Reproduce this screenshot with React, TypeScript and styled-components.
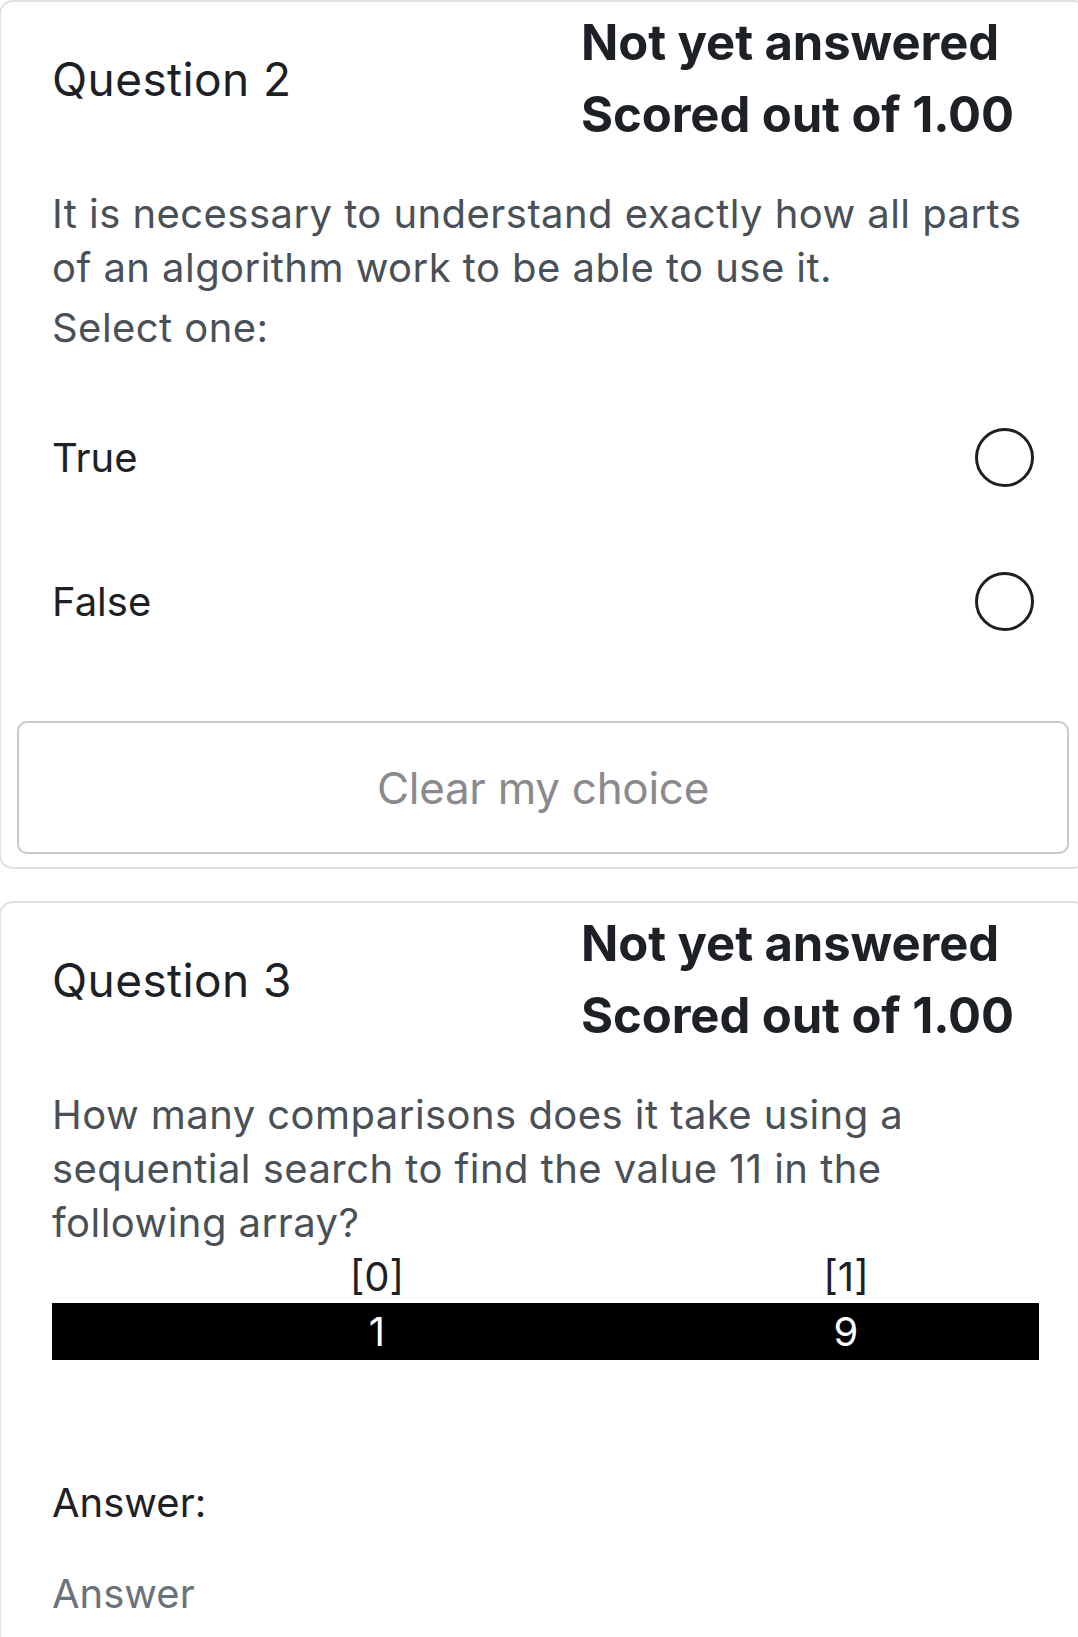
import styled, { createGlobalStyle } from 'styled-components'

const GlobalStyle = createGlobalStyle`
  html, body {
    margin: 0;
    padding: 0;
    background: #ffffff;
    overflow-x: hidden;
  }
  body {
    font-family: Inter, "Noto Sans", "Liberation Sans", sans-serif;
    color: #1d2125;
  }
`

const Page = styled.div`
  width: 1078px;
  overflow: hidden;
  display: flex;
  flex-direction: column;
  gap: 32px;
`

const Card = styled.section`
  width: 1088px;
  margin-left: -1px;
  box-sizing: border-box;
  border: 2px solid #dee2e6;
  border-radius: 14px;
  padding: 5px 52px 13px 51px;
  display: flex;
  flex-direction: column;
`

const Header = styled.header`
  display: grid;
  grid-template-columns: 529px 1fr;
  align-items: center;
`

const QuestionNo = styled.h3`
  margin: 0;
  font-size: 46px;
  font-weight: 400;
  letter-spacing: 0.4px;
  color: #1d2125;
`

const StateBlock = styled.div`
  display: flex;
  flex-direction: column;
`

const StateLine = styled.div`
  font-size: 49px;
  line-height: 72px;
  font-weight: 700;
  letter-spacing: -0.1px;
  color: #1d2125;
`

const QText = styled.div`
  margin-top: 36px;
  font-size: 40px;
  line-height: 54px;
  color: #495057;
  letter-spacing: 0.45px;
`

const Prompt = styled.div`
  margin-top: 6px;
  font-size: 40px;
  line-height: 54px;
  color: #495057;
  letter-spacing: 0.45px;
`

const Options = styled.div`
  margin-top: 30px;
  display: flex;
  flex-direction: column;
`

const OptionRow = styled.label`
  height: 144px;
  display: flex;
  align-items: center;
  justify-content: space-between;
  font-size: 40px;
  color: #1d2125;
`

const Radio = styled.span`
  width: 59px;
  height: 59px;
  box-sizing: border-box;
  border: 3px solid #1d2125;
  border-radius: 50%;
  margin-right: -1px;
`

const ClearButton = styled.button`
  margin: 48px -36px 0 -35px;
  height: 133px;
  box-sizing: border-box;
  border: 2px solid #c8c9cd;
  border-radius: 10px;
  background: #ffffff;
  font-family: inherit;
  font-size: 44px;
  letter-spacing: -0.3px;
  color: #8a8a8e;
`

const ArrayTable = styled.div`
  margin-right: -6px;
  display: grid;
  grid-template-columns: 650px 288px 1fr;
  font-size: 40px;
`

const IndexCell = styled.div`
  height: 53px;
  display: flex;
  align-items: center;
  justify-content: center;
  color: #1d2125;
`

const ValueCell = styled.div`
  height: 57px;
  display: flex;
  align-items: center;
  justify-content: center;
  background: #000000;
  color: #ffffff;
`

const AnswerLabel = styled.div`
  margin-top: 116px;
  font-size: 40px;
  line-height: 54px;
  color: #1d2125;
`

const AnswerInput = styled.input`
  margin: 36px 0 60px;
  padding: 0;
  border: none;
  outline: none;
  height: 54px;
  font-family: inherit;
  font-size: 40px;
  color: #1d2125;
  background: transparent;
  &::placeholder {
    color: #6a737b;
  }
`

function QuestionHeader({ no }: { no: number }) {
  return (
    <Header>
      <QuestionNo>Question {no}</QuestionNo>
      <StateBlock>
        <StateLine>Not yet answered</StateLine>
        <StateLine>Scored out of 1.00</StateLine>
      </StateBlock>
    </Header>
  )
}

export default function App() {
  return (
    <>
      <GlobalStyle />
      <Page>
        <Card>
          <QuestionHeader no={2} />
          <QText>
            It is necessary to understand exactly how all parts of an algorithm work to be able to use it.
          </QText>
          <Prompt>Select one:</Prompt>
          <Options>
            {['True', 'False'].map(o => (
              <OptionRow key={o}>
                <span>{o}</span>
                <Radio />
              </OptionRow>
            ))}
          </Options>
          <ClearButton>Clear my choice</ClearButton>
        </Card>

        <Card>
          <QuestionHeader no={3} />
          <QText>
            How many comparisons does it take using a sequential search to find the value 11 in the following array?
          </QText>
          <ArrayTable>
            <IndexCell>[0]</IndexCell>
            <IndexCell>[1]</IndexCell>
            <IndexCell />
            <ValueCell>1</ValueCell>
            <ValueCell>9</ValueCell>
            <ValueCell />
          </ArrayTable>
          <AnswerLabel>Answer:</AnswerLabel>
          <AnswerInput placeholder="Answer" />
        </Card>
      </Page>
    </>
  )
}
